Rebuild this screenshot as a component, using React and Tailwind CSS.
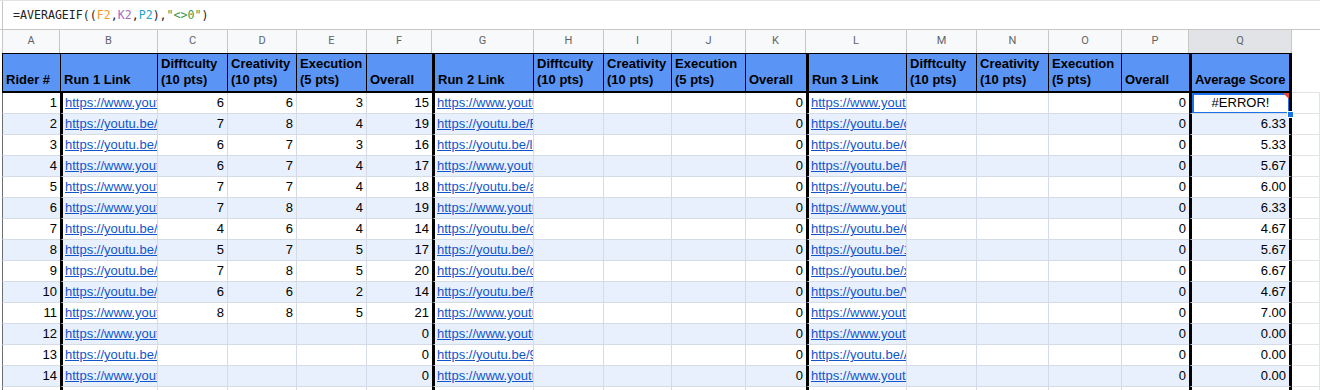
const GRID =
  "grid grid-cols-[58px_98px_70px_69px_70px_65px_102px_70px_68px_74px_60px_101px_70px_72px_73px_67px_103px_28px]";

const LETTERS = ["A", "B", "C", "D", "E", "F", "G", "H", "I", "J", "K", "L", "M", "N", "O", "P", "Q", ""];

const HEADERS = [
  ["Rider #"],
  ["Run 1 Link"],
  ["Difftculty", "(10 pts)"],
  ["Creativity", "(10 pts)"],
  ["Execution", "(5 pts)"],
  ["Overall"],
  ["Run 2 Link"],
  ["Difftculty", "(10 pts)"],
  ["Creativity", "(10 pts)"],
  ["Execution", "(5 pts)"],
  ["Overall"],
  ["Run 3 Link"],
  ["Difftculty", "(10 pts)"],
  ["Creativity", "(10 pts)"],
  ["Execution", "(5 pts)"],
  ["Overall"],
  ["Average Score"],
];

const W = "https://www.youtube.com/watch?v=";
const Y = "https://youtu.be/";

// rider, run1, c, d, e, f, run2, run3, avg
const ROWS = [
  [1, W + "kq2", 6, 6, 3, 15, W + "b7", W + "x1", "#ERROR!"],
  [2, Y + "Tq9", 7, 8, 4, 19, Y + "Fm2", Y + "cR4", "6.33"],
  [3, Y + "a8s", 6, 7, 3, 16, Y + "lk3", Y + "Cz0", "5.33"],
  [4, W + "p3", 6, 7, 4, 17, W + "h2", Y + "hV8", "5.67"],
  [5, W + "n5", 7, 7, 4, 18, Y + "aQ1", Y + "2bT", "6.00"],
  [6, W + "z7", 7, 8, 4, 19, W + "r4", W + "e9", "6.33"],
  [7, Y + "m3k", 4, 6, 4, 14, Y + "cP7", Y + "Cw2", "4.67"],
  [8, Y + "w1e", 5, 7, 5, 17, Y + "xH3", Y + "1Lk", "5.67"],
  [9, Y + "q0r", 7, 8, 5, 20, Y + "cY6", Y + "xN4", "6.67"],
  [10, Y + "j5t", 6, 6, 2, 14, Y + "Fa8", Y + "Vu1", "4.67"],
  [11, W + "d8", 8, 8, 5, 21, W + "s6", W + "g3", "7.00"],
  [12, W + "u2", "", "", "", 0, W + "t1", W + "y5", "0.00"],
  [13, Y + "o4p", "", "", "", 0, Y + "9Df", Y + "Ak2", "0.00"],
  [14, W + "v9", "", "", "", 0, W + "i7", W + "o8", "0.00"],
  [15, Y + "k2m", "", "", "", 0, W + "f3", W + "n2", "0.00"],
];

// border for every data column (index 0..17)
const DATA_BORDER = [
  "border-l border-l-[#6b6f73] border-b border-b-[#d6dce6]",
  "border-l-[3px] border-l-black border-r border-r-[#d6dce6] border-b border-b-[#d6dce6]",
  "border-r border-r-[#d6dce6] border-b border-b-[#d6dce6]",
  "border-r border-r-[#d6dce6] border-b border-b-[#d6dce6]",
  "border-r border-r-[#d6dce6] border-b border-b-[#d6dce6]",
  "border-b border-b-[#d6dce6]",
  "border-l-[3px] border-l-black border-r border-r-[#d6dce6] border-b border-b-[#d6dce6]",
  "border-r border-r-[#d6dce6] border-b border-b-[#d6dce6]",
  "border-r border-r-[#d6dce6] border-b border-b-[#d6dce6]",
  "border-r border-r-[#d6dce6] border-b border-b-[#d6dce6]",
  "border-b border-b-[#d6dce6]",
  "border-l-[3px] border-l-black border-r border-r-[#d6dce6] border-b border-b-[#d6dce6]",
  "border-r border-r-[#d6dce6] border-b border-b-[#d6dce6]",
  "border-r border-r-[#d6dce6] border-b border-b-[#d6dce6]",
  "border-r border-r-[#d6dce6] border-b border-b-[#d6dce6]",
  "border-b border-b-[#d6dce6]",
  "border-l-[3px] border-l-black border-r-[3px] border-r-black border-b border-b-[#d6dce6]",
  "border-r border-r-[#e2e3e3] border-b border-b-[#e2e3e3]",
];

const HEAD_BORDER = [
  "border-l border-l-black",
  "border-l border-l-black border-r border-r-black",
  "border-r border-r-black",
  "border-r border-r-black",
  "border-r border-r-black",
  "",
  "border-l-[3px] border-l-black border-r border-r-black",
  "border-r border-r-black",
  "border-r border-r-black",
  "border-r border-r-black",
  "",
  "border-l-[3px] border-l-black border-r border-r-black",
  "border-r border-r-black",
  "border-r border-r-black",
  "border-r border-r-black",
  "",
  "border-l-[3px] border-l-black border-r-[3px] border-r-black",
];

function FormulaBar() {
  return (
    <div className="h-[30px] pl-[2px] border-t border-t-[#e3e3e3] border-b border-b-[#c7c7c7]">
      <div className="h-full border-l border-l-[#c7c7c7] pl-[10px] pt-[1px] flex items-center font-['DejaVu_Sans_Mono',monospace] text-[11.6px] text-[#222] whitespace-pre">
        <span>=AVERAGEIF((</span>
        <span className="text-[#f29a2e]">F2</span>
        <span>,</span>
        <span className="text-[#a56bc4]">K2</span>
        <span>,</span>
        <span className="text-[#1ea3d4]">P2</span>
        <span>),</span>
        <span className="text-[#3a9a4e]">"&lt;&gt;0"</span>
        <span>)</span>
      </div>
    </div>
  );
}

function LetterRow() {
  return (
    <div className={`${GRID} h-[23px] pl-[2px]`}>
      {LETTERS.map((l, i) => (
        <div
          key={i}
          className={`flex items-center justify-center text-[11px] font-['Roboto',sans-serif] text-[#5f6368] border-r border-r-[#c7c7c7] ${
            i === 0 ? "border-l border-l-[#c7c7c7]" : ""
          } ${i === 16 ? "bg-[#e1e3e6] text-[#3c4043]" : i === 17 ? "bg-white border-r-0" : "bg-[#f8f9fa]"}`}
        >
          {l}
        </div>
      ))}
    </div>
  );
}

function HeaderRow() {
  return (
    <div className={`${GRID} h-[40px] pl-[2px]`}>
      {HEADERS.map((lines, i) => (
        <div
          key={i}
          className={`bg-[#5a95f6] border-t border-t-black border-b-2 border-b-black flex flex-col justify-end pl-[3px] pb-[3px] text-[13px] leading-[16px] font-bold text-black whitespace-nowrap overflow-hidden ${HEAD_BORDER[i]}`}
        >
          {lines.map((t) => (
            <span key={t}>{t}</span>
          ))}
        </div>
      ))}
      <div className="border-b border-b-[#e2e3e3]" />
    </div>
  );
}

function Link({ href }) {
  return <span className="text-[#1155cc] underline">{href}</span>;
}

function DataRow({ row, idx }) {
  const [rider, run1, c, d, e, f, run2, run3, avg] = row;
  const cells = [rider, run1, c, d, e, f, run2, "", "", "", 0, run3, "", "", "", 0, avg, ""];
  const band = idx % 2 === 1 ? "bg-[#e8f0fd]" : "bg-white";
  return (
    <div className={`${GRID} h-[21px] pl-[2px]`}>
      {cells.map((v, i) => {
        const isLink = i === 1 || i === 6 || i === 11;
        const selected = idx === 0 && i === 16;
        return (
          <div
            key={i}
            className={`relative overflow-hidden whitespace-nowrap text-[13px] leading-[20px] text-black ${
              i === 17 ? "bg-white" : band
            } ${isLink ? "pl-[2px]" : selected ? "text-center" : "text-right pr-[3px]"} ${DATA_BORDER[i]}`}
          >
            {isLink ? <Link href={v} /> : v}
            {selected && (
              <>
                <div className="absolute top-0 left-0 right-[-1px] bottom-[-1px] border-2 border-[#1a73e8]" />
                <div className="absolute top-0 right-0 w-0 h-0 border-t-[6px] border-t-[#e3463a] border-l-[6px] border-l-transparent" />
              </>
            )}
          </div>
        );
      })}
    </div>
  );
}

export default function App() {
  return (
    <div className="h-[390px] w-[1320px] overflow-hidden bg-white font-['Liberation_Sans',Arial,sans-serif] relative">
      <FormulaBar />
      <LetterRow />
      <HeaderRow />
      {ROWS.map((r, i) => (
        <DataRow key={i} row={r} idx={i} />
      ))}
      {/* fill handle of the selected cell */}
      <div className="absolute left-[1287px] top-[111px] w-[7px] h-[7px] bg-[#1a73e8] border border-white" />
    </div>
  );
}
